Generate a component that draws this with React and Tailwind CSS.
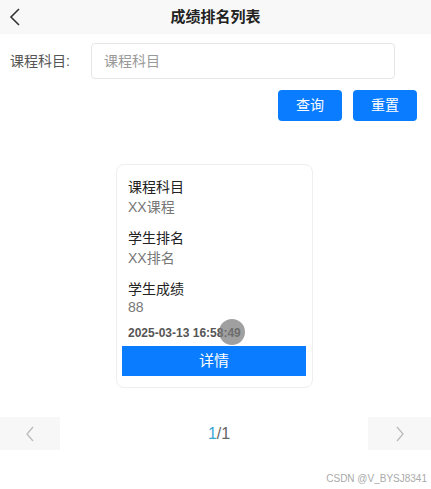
export default function App() {
  return (
    <div
      className="relative w-[431px] h-[489px] bg-white overflow-hidden"
      style={{ fontFamily: '"Liberation Sans", "Noto Sans CJK SC", sans-serif' }}
    >
      <div className="h-[34px] bg-[#f8f8f8] flex items-center relative">
        <svg className="absolute left-[8px] top-[7px]" width="14" height="20" viewBox="0 0 14 20" fill="none">
          <path d="M11 2 L3 10 L11 18" stroke="#333" strokeWidth="1.6" />
        </svg>
        <h1 className="w-full text-center text-[15px] font-bold text-[#222]">成绩排名列表</h1>
      </div>

      <div className="flex items-center mt-[9px] pl-[10px]">
        <span className="w-[81px] text-[14px] text-[#555]">课程科目:</span>
        <div className="w-[304px] h-[36px] border border-[#e6e6e6] rounded-[4px] flex items-center px-[12px] text-[14px] text-[#999]">
          课程科目
        </div>
      </div>

      <div className="flex justify-end gap-[11px] pr-[14px] mt-[11px]">
        <button className="w-[64px] h-[31px] rounded-[4px] bg-[#0a7cff] text-white text-[14px]">查询</button>
        <button className="w-[64px] h-[31px] rounded-[4px] bg-[#0a7cff] text-white text-[14px]">重置</button>
      </div>

      <div className="ml-[116px] mt-[43px] w-[197px] h-[224px] border border-[#eeeeee] rounded-[8px] px-[5px] pt-[12px]">
        <div className="pl-[6px]">
          <div className="text-[14px] leading-[20px] text-[#222]">课程科目</div>
          <div className="text-[14px] leading-[20px] text-[#777]">XX课程</div>
          <div className="text-[14px] leading-[20px] text-[#222] mt-[11px]">学生排名</div>
          <div className="text-[14px] leading-[20px] text-[#777]">XX排名</div>
          <div className="text-[14px] leading-[20px] text-[#222] mt-[11px]">学生成绩</div>
          <div className="text-[14px] leading-[16px] text-[#777]">88</div>
          <div className="text-[12px] leading-[16px] font-semibold text-[#555] mt-[10px]">2025-03-13 16:58:49</div>
        </div>
        <button className="mt-[5px] w-[184px] h-[30px] bg-[#0a7cff] text-white text-[15px]">详情</button>
      </div>

      <div className="flex items-center justify-between mt-[29px]">
        <div className="w-[60px] h-[33px] bg-[#f7f7f7] flex items-center justify-center">
          <svg width="10" height="16" viewBox="0 0 10 16" fill="none">
            <path d="M8 1 L2 8 L8 15" stroke="#bbb" strokeWidth="1.3" />
          </svg>
        </div>
        <div className="text-[16px] text-[#666] ml-[10px]">
          <span className="text-[#3aa8d8]">1</span>/1
        </div>
        <div className="w-[63px] h-[33px] bg-[#f7f7f7] flex items-center justify-center">
          <svg width="10" height="16" viewBox="0 0 10 16" fill="none">
            <path d="M2 1 L8 8 L2 15" stroke="#bbb" strokeWidth="1.3" />
          </svg>
        </div>
      </div>

      <div className="absolute right-[4px] top-[471px] text-[10px] text-[#aaa]">CSDN @V_BYSJ8341</div>

      <div className="absolute left-[219px] top-[319px] w-[26px] h-[26px] rounded-full bg-[#777] opacity-70" />
    </div>
  )
}
